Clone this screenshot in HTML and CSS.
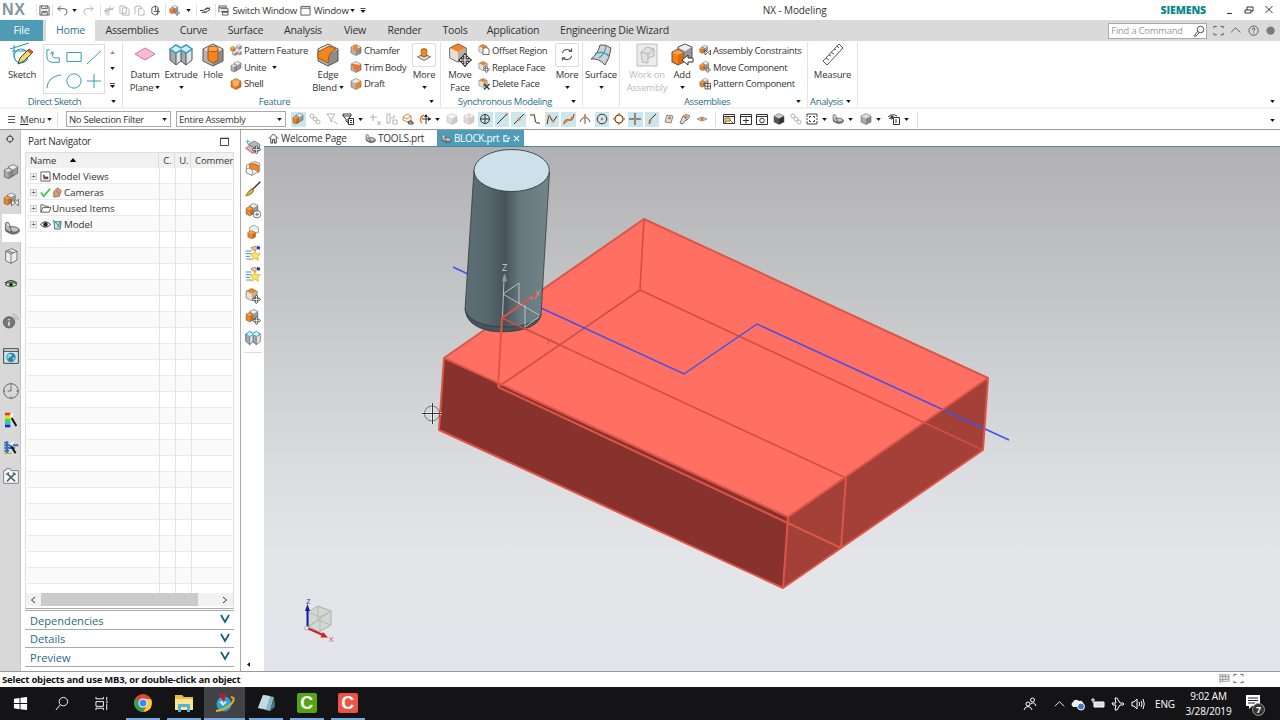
FILE: index.html
```
<!DOCTYPE html>
<html lang="en">
<head>
    <meta charset="utf-8">
    <title>NX - Modeling</title>
    <link rel="stylesheet" href="styles.css">
</head>
<body>
    <!-- shared icons -->
    <svg class="defs">
        <symbol id="cube" viewBox="0 0 24 24">
            <path class="cTop" d="M12 1 22 6 12 11 2 6z"/>
            <path class="cLeft" d="M2 6 12 11V23L2 18z"/>
            <path class="cRight" d="M22 6 12 11V23L22 18z"/>
            <path class="edge" d="M12 1 22 6V18L12 23 2 18V6z"/>
        </symbol>
        <symbol id="cubes" viewBox="0 0 24 24">
            <path class="gTop" d="M15 1 22 4 15 8 8 4z"/>
            <path class="gLeft" d="M8 4 15 8V18L8 14z"/>
            <path class="gRight" d="M22 4 15 8V18L22 14z"/>
            <path class="edge" d="M15 1 22 4V14L15 18 8 14V4z"/>
            <path class="cTop" d="M8 6 14 9 8 12 2 9z"/>
            <path class="cLeft" d="M2 9 8 12V22L2 19z"/>
            <path class="cRight" d="M14 9 8 12V22L14 19z"/>
            <path class="edge" d="M8 6 14 9V19L8 22 2 19V9z"/>
        </symbol>
        <symbol id="move" viewBox="0 0 24 24">
            <path fill="#fff" stroke="#333" stroke-width="2" d="M12 1 16 6H14V10H18V8L23 12 18 16V14H14V18H16L12 23 8 18H10V14H6V16L1 12 6 8V10H10V6H8z"/>
        </symbol>
        <symbol id="cubeMove" viewBox="0 0 24 24">
            <use href="#cube" width="20" height="20"/>
            <use href="#move" x="10" y="10" width="14" height="14"/>
        </symbol>
        <symbol id="cubesMove" viewBox="0 0 24 24">
            <use href="#cubes" width="21" height="21"/>
            <use href="#move" x="11" y="11" width="13" height="13"/>
        </symbol>
        <symbol id="extrude" viewBox="0 0 24 24">
            <path fill="#a4abaf" d="M1 6 7 10V22L1 17zM12 8 17 10V22L12 18z"/>
            <path fill="#dfe3e5" d="M12 8 7 10V22L12 18zM23 6 17 10V22L23 17z"/>
            <path class="edge" d="M1 6V17L7 22 12 18 17 22 23 17V6M7 10V22M12 8V18M17 10V22"/>
            <path fill="#d5eef6" stroke="#2f9fbc" stroke-width="1.500" d="M1 6 7 2 12 5 17 2 23 6 17 10 12 7 7 10z"/>
        </symbol>
        <symbol id="part" viewBox="0 0 24 24">
            <path fill="#777" stroke="#444" d="M2 14Q4 10 13 10 22 11 23 15V17Q20 22 11 21L3 17z"/>
            <path fill="#c9c9c9" stroke="#555" d="M7 12Q14 8 22 13 22 18 14 18 8 17 7 12z"/>
            <path fill="#b5b5b5" stroke="#444" d="M2 14V5Q3 2 7 4 9 6 9 12L12 16 8 18z"/>
            <circle cx="6" cy="7" r="1.500" fill="#eee"/>
        </symbol>
        <symbol id="caret" viewBox="0 0 6 4"><path fill="#111" d="M0 0H6L3 4z"/></symbol>
        <symbol id="bar" viewBox="0 0 6 6"><path fill="#111" d="M0 0H6V1H0zM0 2.500H6L3 6z"/></symbol>
        <symbol id="star" viewBox="0 0 24 24">
            <path stroke="#4a8ad0" stroke-width="1.500" d="M1 9H10M1 13H9M1 17H8M2 21H9"/>
            <path fill="#ffe45c" stroke="#c9a92c" d="M15 8 17 13 23 13 19 17 20 23 15 20 10 23 11 17 8 13 13 13z"/>
            <path fill="#f1c6a0" stroke="#8c6850" d="M9 4 15 2 19 4 16 8 11 7z"/>
            <path fill="#2b36b5" d="M18 1 23 3 22 7 18 6z"/>
        </symbol>
        <symbol id="frame" viewBox="0 0 24 24">
            <path fill="none" stroke="#444" stroke-width="2" d="M2 8V2H22V8M2 16V22H22V16M2 10V14M22 10V14"/>
            <path fill="none" stroke="#444" stroke-width="2" d="M7 10V7H10M14 7H17V10M17 14V17H14M10 17H7V14"/>
        </symbol>
        <symbol id="corners" viewBox="0 0 12 12">
            <path fill="none" stroke="#555" d="M1 3.500V1.500H4M8 1.500H11V3.500M11 8.500V10.500H8M4 10.500H1V8.500"/>
        </symbol>
    </svg>

    <div class="app">
        <div class="titleBar">
            <div class="nxLogo">NX</div>
            <i class="vline"></i>
            <svg class="i12" viewBox="0 0 12 12"><path class="line" d="M1 1H10L11 2V11H1zM3 1V4H9V1M3 11V7H9V11M4 8.500H8M7 2V3"/></svg>
            <i class="vline"></i>
            <svg class="i12 undo" viewBox="0 0 12 12"><path class="line" d="M4 1 1 4 4 7M1 4H8Q11 4 11 7.500 11 10 8 11"/></svg>
            <svg class="caret"><use href="#caret"/></svg>
            <svg class="i12 faint redo" viewBox="0 0 12 12"><path class="line" d="M8 1 11 4 8 7M11 4H4Q1 4 1 7.500 1 10 4 11"/></svg>
            <i class="vline"></i>
            <svg class="i12 faint cut" viewBox="0 0 12 12"><path class="line" d="M7 1 5 8M2 4 10 5M1 7 11 3"/><circle class="line" cx="4" cy="9.500" r="1.500"/><circle class="line" cx="2" cy="6.500" r="1.300"/></svg>
            <svg class="i12 faint" viewBox="0 0 12 12"><path class="line" d="M1 1H6L8 3V9H1zM4 3H9L11 5V11H4z"/></svg>
            <svg class="i12 faint" viewBox="0 0 12 12"><path class="line" d="M1 10V2H3V1H6V2H8V4M5 4H9L11 6V11H5z"/></svg>
            <svg class="i12" viewBox="0 0 12 12"><path class="line" d="M2 3 6 1 9 3V9L6 11 2 9zM4 7H11M8 4V11M6 1V6"/></svg>
            <i class="vline partLine"></i>
            <svg class="i12 orange"><use href="#cubesMove"/></svg>
            <svg class="caret"><use href="#caret"/></svg>
            <i class="vline"></i>
            <svg class="i12 touch" viewBox="0 0 12 12"><path class="line dark" d="M0 6H4L6 8 11 5 8 3 5 5M5 5 11 3M2 8H7"/></svg>
            <i class="vline"></i>
            <svg class="i12" viewBox="0 0 12 12"><path class="line" d="M1 8V1H9V3H1M3 4H11V7H3M5 7H11V11H5zM5 8H11"/></svg>
            <span class="switch">Switch Window</span>
            <svg class="i12" viewBox="0 0 12 12"><path class="line" d="M1 1.500H11V11H1zM1 3.500H11"/></svg>
            <span class="win">Window</span>
            <svg class="caret"><use href="#caret"/></svg>
            <svg class="barCaret"><use href="#bar"/></svg>
            <div class="caption">NX - Modeling</div>
            <div class="siemens">SIEMENS</div>
            <div class="winButtons">
                <svg viewBox="0 0 10 10"><path class="line dark" d="M3 8.500H8"/></svg>
                <svg viewBox="0 0 10 10"><path class="line dark" d="M1 5H7V8H1zM3 5V2H9V6H7"/></svg>
                <svg viewBox="0 0 10 10"><path class="line dark" d="M1.500 1 8.500 8M8.500 1 1.500 8"/></svg>
            </div>
        </div>

        <div class="tabBar">
            <div class="tab file">File</div>
            <div class="tab home">Home</div>
            <div class="tab" style="width:74px">Assemblies</div>
            <div class="tab" style="width:49px">Curve</div>
            <div class="tab" style="width:55px">Surface</div>
            <div class="tab" style="width:60px">Analysis</div>
            <div class="tab" style="width:44px">View</div>
            <div class="tab" style="width:55px">Render</div>
            <div class="tab" style="width:46px">Tools</div>
            <div class="tab" style="width:70px">Application</div>
            <div class="tab wizard">Engineering Die Wizard</div>
            <div class="find"><span>Find a Command</span><svg viewBox="0 0 12 12"><circle class="line" cx="7.500" cy="4.500" r="3.300"/><path class="line" d="M5 6 1 11 3 11 6 8"/></svg></div>
            <div class="tabTools">
                <svg><use href="#corners"/></svg>
                <svg viewBox="0 0 12 12"><path class="line" d="M1 8 6 3 11 8"/></svg>
                <svg viewBox="0 0 12 12"><circle class="line" cx="6" cy="6" r="5"/><path class="line" d="M4.500 5Q4.500 3.200 6 3.200 7.600 3.300 7.500 4.700 6 5.500 6 7M6 8V9"/></svg>
                <svg viewBox="0 0 12 12"><circle fill="#7b7b7b" cx="6" cy="6" r="4.500"/></svg>
            </div>
        </div>

        <div class="ribbon">
            <div class="group sketchGroup">
                <div class="groupBody">
                    <div class="big sketch">
                        <svg viewBox="0 0 24 24"><path class="teal" d="M4 2V14M0 6 19 0M2 8H18"/><circle class="teal" cx="11" cy="13" r="7"/><path fill="#f5d96b" stroke="#444" d="M8 21 10 15 19 6 23 9 14 18z"/><path fill="#d9553c" d="M19 6 23 9 21 11 17 8z"/></svg>
                        <span>Sketch</span>
                    </div>
                    <div class="gallery">
                        <svg viewBox="0 0 18 18"><path class="teal" d="M1 1V8Q1 15 8 15H15V10H10Q7 10 7 4M5 6 7 3 9 6M1 1H4"/></svg>
                        <svg viewBox="0 0 18 18"><path class="teal" d="M1 4H17V14H1z"/></svg>
                        <svg viewBox="0 0 18 18"><path class="teal" d="M1 17 17 2"/></svg>
                        <svg viewBox="0 0 18 18"><path class="teal" d="M1 17Q2 4 17 2"/></svg>
                        <svg viewBox="0 0 18 18"><circle class="teal" cx="9" cy="9" r="8"/></svg>
                        <svg viewBox="0 0 18 18"><path class="teal" d="M9 1V17M1 9H17"/></svg>
                    </div>
                    <div class="galleryArrows">
                        <svg class="up"><use href="#caret"/></svg>
                        <svg><use href="#caret"/></svg>
                        <svg class="tall"><use href="#bar"/></svg>
                    </div>
                </div>
                <div class="groupLabel">Direct Sketch<svg class="corner"><use href="#caret"/></svg></div>
            </div>

            <div class="group featureGroup">
                <div class="groupBody">
                    <div class="big datum">
                        <svg viewBox="0 0 24 24"><path fill="#f9b9d2" stroke="#d5799c" d="M12 5 22 11 12 17 2 11z"/></svg>
                        <span>Datum</span><span>Plane <svg class="caret"><use href="#caret"/></svg></span>
                    </div>
                    <div class="big extrude">
                        <svg><use href="#extrude"/></svg>
                        <span>Extrude</span><span><svg class="caret"><use href="#caret"/></svg></span>
                    </div>
                    <div class="big hole">
                        <svg viewBox="0 0 24 24"><use href="#cube" width="24" height="24"/><path fill="#f5851f" stroke="#a85510" d="M7 6V17L12 20 17 17V6"/><ellipse fill="#f9a14b" stroke="#a85510" cx="12" cy="6" rx="5" ry="2.800"/></svg>
                        <span>Hole</span>
                    </div>
                    <div class="small featA">
                        <div><svg viewBox="0 0 24 24"><use href="#cube" x="0" y="4" width="12" height="12" class="orange"/><use href="#cube" x="12" y="0" width="12" height="12"/><use href="#cube" x="4" y="13" width="11" height="11"/><use href="#cube" x="13" y="12" width="11" height="11"/></svg>Pattern Feature</div>
                        <div><svg><use href="#cubes"/></svg>Unite <svg class="caret"><use href="#caret"/></svg></div>
                        <div><svg class="orange" viewBox="0 0 24 24"><use href="#cube" width="24" height="24"/><circle cx="12" cy="11" r="6" fill="#ffb464"/></svg>Shell</div>
                    </div>
                    <div class="big blend">
                        <svg viewBox="0 0 24 24"><use href="#cube" width="24" height="24"/><path fill="#f5851f" stroke="#a85510" d="M2 9 13 3 20 6Q12 9 12 20L2 15z"/></svg>
                        <span>Edge</span><span>Blend <svg class="caret"><use href="#caret"/></svg></span>
                    </div>
                    <div class="small featB">
                        <div><svg viewBox="0 0 24 24"><use href="#cube" width="24" height="24"/><path fill="#f5851f" d="M5 4 13 1 18 11 8 15z"/></svg>Chamfer</div>
                        <div><svg viewBox="0 0 24 24"><use href="#cube" width="24" height="24"/><path fill="#e77735" d="M3 5 20 8V20L8 18z"/></svg>Trim Body</div>
                        <div><svg viewBox="0 0 24 24"><use href="#cube" width="24" height="24"/><path fill="#f5851f" d="M11 10 22 6 20 19 12 23z"/></svg>Draft</div>
                    </div>
                    <div class="big more">
                        <svg viewBox="0 0 24 24"><path fill="#ddd" stroke="#666" d="M12 11 19 14 12 18 5 14z"/><path fill="#f5851f" stroke="#a85510" d="M9 6Q12 4 15 6V13Q12 15 9 13z"/></svg>
                        <span>More</span><span><svg class="caret"><use href="#caret"/></svg></span>
                    </div>
                </div>
                <div class="groupLabel">Feature<svg class="corner"><use href="#caret"/></svg></div>
            </div>

            <div class="group syncGroup">
                <div class="groupBody">
                    <div class="big moveFace">
                        <svg class="topOrange"><use href="#cubeMove"/></svg>
                        <span>Move</span><span>Face</span>
                    </div>
                    <div class="small sync">
                        <div><svg class="topOrange" viewBox="0 0 24 24"><use href="#cube" width="20" height="20"/><path fill="#fff" stroke="#444" stroke-width="1.500" d="M10 9 16 7 22 10V21H10z"/></svg>Offset Region</div>
                        <div><svg class="topOrange"><use href="#cubeMove"/></svg>Replace Face</div>
                        <div><svg class="topOrange" viewBox="0 0 24 24"><use href="#cube" width="20" height="20"/><path stroke="#333" stroke-width="2.500" d="M12 12 23 23M23 12 12 23"/></svg>Delete Face</div>
                    </div>
                    <div class="big more">
                        <svg viewBox="0 0 24 24"><path class="line thick" d="M7 10Q8 6 12 6 15 6 17 8M17 5V8H14M17 13Q16 17 12 17 9 17 7 15M7 18V15H10"/></svg>
                        <span>More</span><span><svg class="caret"><use href="#caret"/></svg></span>
                    </div>
                </div>
                <div class="groupLabel">Synchronous Modeling<svg class="corner"><use href="#caret"/></svg></div>
            </div>

            <div class="group surfaceGroup">
                <div class="groupBody">
                    <div class="big surface">
                        <svg viewBox="0 0 24 24"><path fill="#cdd2d5" stroke="#555" d="M2 16Q9 11 11 2 17 1 22 5 21 15 16 22 10 15 2 16z"/><path class="teal" d="M10 15Q16 11 17 3M6 11Q13 7 20 13"/></svg>
                        <span>Surface</span><span><svg class="caret"><use href="#caret"/></svg></span>
                    </div>
                </div>
            </div>

            <div class="group asmGroup">
                <div class="groupBody">
                    <div class="big work">
                        <svg viewBox="0 0 24 24"><path fill="#ececec" stroke="#bdbdbd" d="M2 1H22V23H2z"/><path fill="#e0e0e0" stroke="#b5b5b5" d="M6 9 12 4 19 6V13L13 15V20L7 19z"/><path fill="none" stroke="#b5b5b5" d="M6 9 13 11 19 6M13 11V15"/></svg>
                        <span>Work on</span><span>Assembly</span>
                    </div>
                    <div class="big add">
                        <svg class="orange" viewBox="0 0 24 24"><use href="#cubes" width="24" height="24"/><path fill="#fff" stroke="#333" d="M23 15V19H18V22L12 17 18 12V15z"/></svg>
                        <span>Add</span><span><svg class="caret"><use href="#caret"/></svg></span>
                    </div>
                    <div class="small asm">
                        <div><svg class="orange" viewBox="0 0 24 24"><use href="#cubes" width="19" height="22"/><path fill="#fff" stroke="#333" stroke-width="1.500" d="M12 12 17 17 12 22zM23 12 18 17 23 22z"/></svg>Assembly Constraints</div>
                        <div><svg class="orange"><use href="#cubesMove"/></svg>Move Component</div>
                        <div><svg class="orange" viewBox="0 0 24 24"><use href="#cubes" width="20" height="20"/><path fill="#fff" stroke="#333" stroke-width="1.500" d="M12 11H23V22H12zM17.500 11V22M12 16.500H23"/></svg>Pattern Component</div>
                    </div>
                </div>
                <div class="groupLabel">Assemblies<svg class="corner"><use href="#caret"/></svg></div>
            </div>

            <div class="group anaGroup">
                <div class="groupBody">
                    <div class="big measure">
                        <svg viewBox="0 0 24 24"><path fill="#fff" stroke="#555" d="M2 18 18 1 22 5 6 22zM5 15 8 17M8 12 10 13M10 9 13 11M13 6 15 7M16 3 18 5"/></svg>
                        <span>Measure</span>
                    </div>
                </div>
                <div class="groupLabel">Analysis<svg class="corner"><use href="#caret"/></svg></div>
            </div>
            <svg class="ribbonCaret"><use href="#caret"/></svg>
        </div>

        <div class="selectBar">
            <svg class="burger" viewBox="0 0 8 8"><path class="line" d="M0 1.500H7M0 4.500H7M0 7.500H7"/></svg>
            <span class="menu"><u>M</u>enu</span>
            <svg class="caret"><use href="#caret"/></svg>
            <i class="vline"></i>
            <div class="combo comboA">No Selection Filter<svg class="caret"><use href="#caret"/></svg></div>
            <div class="combo comboB">Entire Assembly<svg class="caret"><use href="#caret"/></svg></div>
            <div class="slots">
                <div class="slot on"><svg class="orange"><use href="#cubes"/></svg></div>
                <div class="slot faint"><svg viewBox="0 0 12 12"><circle class="line" cx="3" cy="3" r="2"/><circle class="line" cx="6" cy="6" r="2"/><circle class="line" cx="9" cy="9" r="2"/></svg></div>
                <div class="slot faint"><svg viewBox="0 0 12 12"><path class="line" d="M1 1H9L6 5V9L4 7V5zM8 8 11 11"/></svg></div>
                <div class="slot"><svg viewBox="0 0 12 12"><path class="line dark" d="M1 3V1H9V3M1 3H9L6 6V10L4 8V6z"/><path class="line dark" d="M6.500 5.500H11.500V11.500H6.500zM8 7.500H10M8 9.500H10"/></svg></div>
                <svg class="caret"><use href="#caret"/></svg>
                <div class="slot faint gapLeft"><svg viewBox="0 0 12 12"><path class="line" d="M4 1V8M1 4H8M8 8 11 11M11 8V11H8"/></svg></div>
                <div class="slot faint"><svg viewBox="0 0 12 12"><path class="line" d="M1 1H4V10H1zM5 5H8V2M7 7H11V11H7z"/></svg></div>
                <div class="slot"><svg viewBox="0 0 12 12"><path fill="#fff" stroke="#d98a35" d="M1 4 5 1 9 3V7L5 9 1 7zM1 4 5 6 9 3"/><path class="line dark" d="M6 9H11V11H7zM9 7V9"/></svg></div>
                <div class="slot"><svg viewBox="0 0 12 12"><path fill="none" stroke="#e07b2a" stroke-width="1.500" d="M3 10Q-1 5 5 2"/><path class="line dark" d="M3 6H12M7 2V11"/><path fill="#222" d="M7 1 9 4H5zM12 6 9 8V4z"/></svg></div>
                <svg class="caret"><use href="#caret"/></svg>
                <div class="slot faint gapLeft"><svg><use href="#cube"/></svg></div>
                <div class="slot faint"><svg viewBox="0 0 24 24"><use href="#cube" width="24" height="24"/><path stroke="#e07b2a" stroke-width="3" d="M12 3V20"/></svg></div>
                <div class="slot on"><svg viewBox="0 0 12 12"><circle class="line dark" cx="6" cy="6" r="4.500"/><path class="line dark" d="M6 2V10M2 6H10"/></svg></div>
                <div class="slot on"><svg viewBox="0 0 12 12"><path class="line dark" d="M1 11 10 2"/><circle class="dot" cx="10.500" cy="1.500" r="1.300"/></svg></div>
                <div class="slot on"><svg viewBox="0 0 12 12"><path class="line dark" d="M1 11 11 1"/><circle class="dot" cx="6" cy="6" r="1.500"/></svg></div>
                <div class="slot"><svg viewBox="0 0 12 12"><path class="line dark" d="M1 2H4Q6 2 6 6T8 10H11"/><circle class="dot" cx="5" cy="2" r="1.300"/></svg></div>
                <div class="slot on"><svg viewBox="0 0 12 12"><path class="line dark" d="M1 11 3 2 7 9 11 3"/><circle class="dot" cx="3" cy="3" r="1.500"/><circle class="dot" cx="7" cy="8" r="1.500"/></svg></div>
                <div class="slot on"><svg viewBox="0 0 12 12"><path fill="none" stroke="#b3602a" stroke-width="1.500" d="M1 11Q2 6 6 7T11 1"/><circle class="dot" cx="3" cy="8" r="1.500"/><circle class="dot" cx="9" cy="5" r="1.500"/></svg></div>
                <div class="slot"><svg viewBox="0 0 12 12"><path class="line" d="M1 9Q2 5 6 4 10 5 11 9M6 1V11"/><circle class="dot" cx="6" cy="4" r="1.500"/></svg></div>
                <div class="slot on"><svg viewBox="0 0 12 12"><circle class="line dark" cx="6" cy="6" r="4.800"/><circle class="dot" cx="6" cy="6" r="1.300"/></svg></div>
                <div class="slot"><svg viewBox="0 0 12 12"><circle class="line dark" cx="6" cy="6" r="4"/><circle class="dot" cx="6" cy="1.500" r="1.400"/><circle class="dot" cx="10.500" cy="6" r="1.400"/><circle class="dot" cx="6" cy="10.500" r="1.400"/><circle class="dot" cx="1.500" cy="6" r="1.400"/></svg></div>
                <div class="slot on"><svg viewBox="0 0 12 12"><path class="line dark" d="M6 0V12M0 6H12"/><circle class="dot" cx="6" cy="6" r="1.500"/></svg></div>
                <div class="slot on"><svg viewBox="0 0 12 12"><path class="line dark" d="M3 11Q4 5 10 1"/><circle class="dot" cx="4" cy="8" r="1.500"/></svg></div>
                <div class="slot"><svg viewBox="0 0 12 12"><path fill="#ddd" stroke="#888" d="M2 9 4 2 10 3 8 10z"/><circle class="dot" cx="6.500" cy="5" r="1.500"/></svg></div>
                <div class="slot"><svg viewBox="0 0 12 12"><path fill="#ddd" stroke="#777" d="M1 10 4 3Q8 0 11 3L8 7Q5 7 4 11zM4 3 8 7"/><circle class="dot" cx="7" cy="4" r="1.500"/></svg></div>
                <div class="slot"><svg viewBox="0 0 12 12"><path fill="#ddd" stroke="#999" d="M1 6 6 4 11 6 6 8z"/><circle class="dot" cx="6" cy="6" r="1.700"/></svg></div>
                <i class="vline"></i>
                <div class="slot"><svg viewBox="0 0 12 12"><path fill="#fff" stroke="#333" d="M.5 1.500H11.500V10.500H.5zM.5 3.500H11.500"/><path fill="#f6cf8f" stroke="#9a6b2b" d="M2 5H7V8H4L2 10zM7 7 10 10"/></svg></div>
                <div class="slot"><svg viewBox="0 0 12 12"><path class="line dark" d="M.5 1.500H11.500V11.500H.5zM.5 3.500H11.500M6 4.500V10.500M3 7.500H9"/></svg></div>
                <div class="slot"><svg viewBox="0 0 12 12"><path class="line dark" d="M.5 1.500H11.500V11.500H.5zM.5 3.500H11.500"/><circle class="line dark" cx="6" cy="7.500" r="2.300"/></svg></div>
                <div class="slot darkCube"><svg><use href="#cube"/></svg></div>
                <div class="slot faint"><svg viewBox="0 0 12 12"><circle class="line" cx="3" cy="3" r="2"/><circle class="line" cx="6" cy="6" r="2"/><circle class="line" cx="9" cy="9" r="2"/></svg></div>
                <div class="slot"><svg><use href="#frame"/></svg></div>
                <svg class="caret"><use href="#caret"/></svg>
                <div class="slot half"><svg><use href="#part"/></svg></div>
                <svg class="caret"><use href="#caret"/></svg>
                <div class="slot half"><svg class="midGray"><use href="#cube"/></svg></div>
                <svg class="caret"><use href="#caret"/></svg>
                <div class="slot half"><svg viewBox="0 0 12 12"><path class="line dark" d="M0 4Q4 0 9 3M1 5Q4 7 5 5"/><circle cx="4" cy="4" r="1.600" fill="#333"/><path fill="#fff" stroke="#333" d="M5.500 4.500H11.500V11.500H5.500zM7 7H9M7 9H9"/></svg></div>
                <svg class="caret"><use href="#caret"/></svg>
                <i class="vline"></i>
            </div>
            <svg class="caret last"><use href="#caret"/></svg>
        </div>

        <div class="main">
            <div class="resourceBar">
                <div class="gear"><svg viewBox="0 0 12 12"><circle class="line dark" cx="6" cy="6" r="3.500"/><path class="line dark" d="M6 1V3M6 9V11M1 6H3M9 6H11"/></svg></div>
                <div class="res"><svg class="midGray"><use href="#cubes"/></svg></div>
                <div class="res"><svg class="orange" viewBox="0 0 24 24"><use href="#cubes" width="20" height="22"/><path fill="#fff" stroke="#333" d="M13 11 18 16 13 21zM23 11 18 16 23 21z"/></svg></div>
                <div class="res active"><svg><use href="#part"/></svg></div>
                <div class="res"><svg viewBox="0 0 24 24"><path fill="#ededed" stroke="#444" d="M4 5 13 1 21 5V18L12 23 4 19zM4 5 12 9 21 5M12 9V23M7 4 15 7"/></svg></div>
                <div class="res"><svg viewBox="0 0 24 24"><path fill="#dcefd4" stroke="#3d5f35" stroke-width="1.500" d="M3 13Q12 6 21 13 12 19 3 13z"/><circle cx="12" cy="13" r="3.500" fill="#418a30"/><circle cx="12" cy="13" r="1.700"/><path stroke="#333" stroke-width="2" fill="none" d="M3 11Q12 3 21 11"/></svg></div>
                <div class="res gap9"><svg viewBox="0 0 24 24"><circle cx="9" cy="14" r="8.500" fill="#777" stroke="#444"/><path stroke="#fff" stroke-width="2" d="M9 9V11M9 13V19"/><path fill="none" stroke="#aaa" stroke-width="1.500" d="M14 1Q22 3 23 11M14 4Q19 5 20 11"/></svg></div>
                <div class="res gap7"><svg viewBox="0 0 24 24"><path fill="#d5e6ee" stroke="#444" stroke-width="1.500" d="M1 1H23V23H1zM1 5H23"/><circle cx="12" cy="14" r="7" fill="#2587ab"/><path fill="#9dd5df" d="M8 9Q13 8 14 12 9 13 7 17 5 13 8 9zM14 15 18 13 16 19z"/></svg></div>
                <div class="res gap7"><svg viewBox="0 0 24 24"><circle class="line dark" cx="12" cy="12" r="11"/><path class="line dark" d="M12 4V12H7M12 20V23M20 12H23M1 12H3M12 1V3"/></svg></div>
                <div class="res gap1"><svg viewBox="0 0 24 24"><path fill="#e33b26" d="M3 1H11V6H3z"/><path fill="#f5d928" d="M3 5H11V10H3z"/><path fill="#30e43b" d="M3 10H11V15H3z"/><path fill="#20c4e8" d="M3 15H11V19H3z"/><path fill="#1929cf" d="M3 19H11V23H3z"/><path fill="#fff" d="M10 4 16 2 14 10z"/><path stroke="#111" stroke-width="3" d="M13 9 20 21"/></svg></div>
                <div class="res"><svg viewBox="0 0 24 24"><path stroke="#3471b9" stroke-width="3" d="M2 4H8M2 8H23M2 12H18M2 16H9M6 2V20"/><path stroke="#c4a64d" stroke-width="2" d="M2 20H13"/><path fill="#fff" d="M10 6 16 2 14 10z"/><path stroke="#111" stroke-width="3" d="M12 9 19 20"/></svg></div>
                <div class="res"><svg viewBox="0 0 24 24"><path fill="#f7f7f7" stroke="#7c858a" stroke-width="1.500" d="M1 4H4L5 1H11L12 4H23V23H1z"/><path stroke="#4f6872" stroke-width="2.500" d="M6 8 18 20M18 8 6 20M5 10 9 7M15 7 19 10"/></svg></div>
            </div>

            <div class="navigator">
                <div class="navTitle">Part Navigator<svg viewBox="0 0 10 10"><path class="line dark" d="M.5 1.500H9.500V9.500H.5zM0 1.500H10"/></svg></div>
                <div class="tree">
                    <div class="treeHead">
                        <div class="colName">Name<svg class="sort" viewBox="0 0 8 5"><path d="M0 5 4 0 8 5z"/></svg></div>
                        <div class="colC">C.</div><div class="colC">U.</div><div class="colLast">Commer</div>
                    </div>
                    <div class="treeBody">
                        <div class="treeRow"><i class="plus">+</i><svg viewBox="0 0 12 12"><path class="line" d="M1 1H11V11H1z"/><path fill="#555" d="M3 4H5V6H9V9H4z"/></svg>Model Views</div>
                        <div class="treeRow"><i class="plus">+</i><svg viewBox="0 0 12 12"><path fill="none" stroke="#2fc43c" stroke-width="1.700" d="M1 6 4 10 11 2"/></svg><svg viewBox="0 0 12 12"><path fill="#d6a173" stroke="#8d6a4b" d="M2 5 6 1 10 4 8 10 2 11zM5 4 7 7"/></svg>Cameras</div>
                        <div class="treeRow"><i class="plus">+</i><svg viewBox="0 0 12 12"><path class="line" d="M1 10V2H4L5 3.500H9V5M1 10 3 5H12L10 10z"/></svg>Unused Items</div>
                        <div class="treeRow"><i class="plus">+</i><svg viewBox="0 0 12 12"><path class="line dark" d="M.5 6Q6 0 11.500 6 6 12 .5 6z"/><circle cx="6" cy="6" r="2.400" fill="#222"/></svg><svg viewBox="0 0 12 12"><path fill="#cfe0e6" stroke="#666" d="M2 3H10L9 11H3z"/><path class="teal" d="M1 1 9 9M10 2 6 9"/></svg>Model</div>
                    </div>
                    <div class="hScroll">
                        <svg viewBox="0 0 6 8"><path class="line dark" d="M5 1 1.500 4 5 7"/></svg>
                        <div class="track"><div class="thumb"></div></div>
                        <svg viewBox="0 0 6 8"><path class="line dark" d="M1 1 4.500 4 1 7"/></svg>
                    </div>
                </div>
                <div class="panels">
                    <div class="panel">Dependencies<svg viewBox="0 0 10 8"><path d="M1 0 5 7 9 0"/></svg></div>
                    <div class="panel">Details<svg viewBox="0 0 10 8"><path d="M1 0 5 7 9 0"/></svg></div>
                    <div class="panel">Preview<svg viewBox="0 0 10 8"><path d="M1 0 5 7 9 0"/></svg></div>
                </div>
            </div>

            <div class="toolStrip">
                <div class="tool"><svg viewBox="0 0 24 24"><path fill="#e9a9c0" stroke="#555" d="M1 14 12 6 22 12 12 22z"/><path fill="#b4bbbf" stroke="#555" d="M5 8 14 3 22 8V16L12 12z"/><path class="teal" d="M1 4H8M4 1V8"/><use href="#move" x="10" y="9" width="14" height="14"/></svg></div>
                <div class="tool"><svg viewBox="0 0 24 24"><path fill="#eee" stroke="#666" d="M2 8 14 2 22 5V17L10 23 2 19z"/><path fill="#f5851f" stroke="#a85510" d="M7 6Q15 4 20 8V18Q15 12 7 14z"/><path fill="#fff" stroke="#777" d="M2 13Q8 11 11 16V23L2 19z"/></svg></div>
                <div class="tool"><svg viewBox="0 0 24 24"><path stroke="#333" stroke-width="2" d="M23 1 10 14"/><path fill="#e0aa32" stroke="#665522" d="M11 12Q9 11 6 15L1 22Q9 22 13 15z"/></svg></div>
                <div class="tool"><svg class="orange" viewBox="0 0 24 24"><use href="#cubes" width="21" height="21"/><circle cx="18" cy="17" r="5.500" fill="#fff" stroke="#333"/><path stroke="#333" d="M18 14V20M15 17H21"/></svg></div>
                <div class="tool"><svg class="orange" viewBox="0 0 24 24"><path fill="#f2f2f2" stroke="#777" d="M7 5 14 2 20 5V13L13 14H7z"/><use href="#cube" x="3" y="9" width="14" height="14"/></svg></div>
                <div class="tool"><svg><use href="#star"/></svg></div>
                <div class="tool"><svg><use href="#star"/></svg></div>
                <div class="tool"><svg class="topOrange"><use href="#cubeMove"/></svg></div>
                <div class="tool"><svg class="orange"><use href="#cubesMove"/></svg></div>
                <div class="tool"><svg><use href="#extrude"/></svg></div>
                <div class="stripEnd"></div>
                <svg class="left" viewBox="0 0 4 6"><path d="M4 0V6L0 3z"/></svg>
            </div>

            <div class="work-area">
                <div class="docTabs">
                    <div class="docTab welcome"><svg viewBox="0 0 12 12"><path class="line dark" d="M1 6 6 1 11 6M3 5V11H5V7H7V11H9V5"/></svg>Welcome Page</div>
                    <div class="docTab tools"><svg><use href="#part"/></svg>TOOLS.prt</div>
                    <div class="docTab block"><svg><use href="#part"/></svg>BLOCK.prt<svg class="mini" viewBox="0 0 8 8"><path d="M5 1H1V7H6V5M4 4H7V2"/></svg><svg class="mini close" viewBox="0 0 8 8"><path d="M1 1 7 7M7 1 1 7"/></svg></div>
                </div>
                <!-- graphics window, user units are screen pixels -->
                <svg class="scene" viewBox="264 147 1016 524">
                    <defs>
                        <linearGradient id="steel">
                            <stop offset="0" stop-color="#5c6d74"/>
                            <stop offset=".25" stop-color="#58696f"/>
                            <stop offset=".47" stop-color="#46545a"/>
                            <stop offset=".65" stop-color="#67777e"/>
                            <stop offset="1" stop-color="#74848b"/>
                        </linearGradient>
                    </defs>
                    <path class="blue" d="M453 267 470 275"/>
                    <path fill="#ff7063" d="M644 219 988 378 788 517 444 358z"/>
                    <path fill="#88322d" d="M444 358 788 517 783 588 439 430z"/>
                    <path fill="#a34138" d="M988 378 983 450 783 588 788 517z"/>
                    <path class="inner" d="M644 219 640 290 983 450M640 290 498 387M502 318 846 478"/>
                    <path class="blue" d="M541 308 684 374 757 324 1009 440"/>
                    <path class="outer" d="M644 219 988 378 788 517 444 358zM444 358 439 430 783 588 983 450 988 378M788 517 783 588M846 478 841 548 498 387"/>
                    <path fill="#45555c" stroke="#2b3639" stroke-width=".7" d="M465 309Q466 326 490 331 512 334 530 327 540 322 541 315z"/>
                    <path fill="url(#steel)" d="M474 170 465 309C467 322 488 327 505 327S539 322 541 315L549.500 172z"/>
                    <path fill="none" stroke="#273135" stroke-width=".7" d="M474 170 465 309C467 322 488 327 505 327S539 322 541 315L549.500 172"/>
                    <ellipse cx="511.700" cy="170.500" rx="37.700" ry="21" fill="#cce1ea" stroke="#273135" stroke-width=".8"/>
                    <path class="outer" d="M538 293 502 318 498 387"/>
                    <path class="inner" d="M502 318 560 345"/>
                    <g fill="none" stroke="#c3cbce" stroke-width=".9">
                        <path d="M502.500 316 504 280M503 294 519 283V304M503 294 539 315M525 305V327L539 317"/>
                        <path fill="#8e9a9e" stroke="#8e9a9e" d="M504.500 274 502.500 281H506.500z"/>
                    </g>
                    <path fill="none" stroke="#c9968e" d="M536 291 539 295M540 290 535 299M530 297 533 299"/>
                    <path fill="none" stroke="#b8675c" d="M537 334 541 336M546 339 549 342M552 338 547 344"/>
                    <text x="502" y="271" class="axis">Z</text>
                    <!-- cursor -->
                    <g fill="none" stroke="#fff" stroke-width="2.500" opacity=".7"><path d="M432.500 403V424M422 413.500H442"/></g>
                    <g fill="none" stroke="#333"><circle cx="432" cy="413.500" r="7.500" stroke-width=".6"/><path d="M432.500 403V424M422 413.500H442"/></g>
                    <!-- view triad -->
                    <path fill="#d3d7d3" stroke="#aab0aa" d="M308 612 318 606 331 611V625L319 632 308 626z"/>
                    <path fill="none" stroke="#b5bab5" d="M308 612 320 617 331 611M320 617V632M318 606V620L308 626M318 620 331 625"/>
                    <path stroke="#a2c6a4" d="M307 628 328 613"/>
                    <path stroke="#10209c" stroke-width="2" d="M307.500 627V610"/><path fill="#10209c" d="M307.500 604 310 611H305z"/>
                    <path stroke="#c22" stroke-width="2" d="M307 628 323 635"/><path fill="#c22" d="M328 637.500 320.500 637.500 323 632z"/>
                    <circle cx="306.500" cy="628" r="2" fill="#eee" stroke="#888" stroke-width=".6"/>
                    <text x="306" y="604" class="axis z">Z</text>
                    <text x="329" y="642" class="axis x">X</text>
                </svg>
            </div>
        </div>

        <div class="statusBar">
            <span>Select objects and use MB3, or double-click an object</span>
            <svg viewBox="0 0 12 12"><path class="line" opacity=".6" d="M1 1V11M1 2H11V9H1M4 2V4H1M4 4H7V2M7 4H10V7H7zM4 4V7H7M4 7V9M1 7H4"/></svg>
            <svg><use href="#corners"/></svg>
        </div>

        <div class="taskBar">
            <div class="task"><svg viewBox="0 0 16 16"><path fill="#fff" d="M1 3 7 2V7.500H1zM8 1.900 15 1V7.500H8zM1 8.500H7V14L1 13zM8 8.500H15V15L8 14z"/></svg></div>
            <div class="task"><svg viewBox="0 0 16 16"><path class="white" d="M7 9 2 15"/><circle class="white" cx="10" cy="6" r="4.500"/></svg></div>
            <div class="task"><svg viewBox="0 0 16 16"><path class="white" d="M1 1V3H9V1M1 6H9V11H1zM1 15V13H9V15M12.500 1V5M12.500 8V15M11.500 6.500H14"/></svg></div>
            <div class="task open"><svg class="large" viewBox="0 0 20 20"><circle cx="10" cy="10" r="9" fill="#e34436"/><path fill="#2ea454" d="M2.200 5.500 10 10 11 19Q3 19 1 11 1 8 2.200 5.500z"/><path fill="#fbcb3a" d="M10 6H18Q20 11 17 16 14 19 10.500 19L14 11z"/><circle cx="10" cy="10" r="4.500" fill="#fff"/><circle cx="10" cy="10" r="3.500" fill="#4285f4"/></svg></div>
            <div class="task open"><svg class="large" viewBox="0 0 20 20"><path fill="#e7bd51" d="M1 2H8L10 4H19V16H1z"/><path fill="#fce58e" d="M1 6H19V17H1z"/><path fill="#55b2d8" d="M4 11H16V19H13V14H7V19H4z"/></svg></div>
            <div class="task open current"><svg class="large" viewBox="0 0 20 20"><circle cx="9" cy="11" r="7.500" fill="#28a5cf"/><path fill="#bdeaf2" d="M4 9Q8 6 12 9L8 13z"/><path fill="none" stroke="#eca92c" stroke-width="2" d="M16 4Q21 5 17 10 10 17 1 18"/><path fill="#c2183a" d="M3 1 11 1 9 10 7 6z"/></svg></div>
            <div class="task open"><svg class="large" viewBox="0 0 20 20"><path fill="#86b6c4" d="M7 2 18 4 14 18 2 15z"/><path fill="#c2dbe1" d="M7 2 14 3 10 16 2 15z"/><path fill="#4b7380" d="M14 18 18 4 19 14z"/></svg></div>
            <div class="task open"><div class="camtasia green">C</div></div>
            <div class="task open"><div class="camtasia red">C</div></div>
            <div class="tray">
                <svg class="people" viewBox="0 0 14 14"><circle class="white" cx="9.500" cy="3" r="2"/><circle class="white" cx="5" cy="7" r="2"/><path class="white" d="M1 13Q2 9.500 5 9.500T9 13M7.500 7Q11 4 13 9"/></svg>
                <svg class="chev" viewBox="0 0 12 12"><path class="white" d="M1 9 6 4 11 9"/></svg>
                <svg viewBox="0 0 14 14"><path fill="#eee" d="M2 10Q-1 7 2 5 4 1 8 4 12 3 12 7V10z"/><circle cx="10" cy="9.500" r="3.500" fill="#3b77c8" stroke="#fff"/></svg>
                <svg viewBox="0 0 14 14"><path fill="#ddd" stroke="#fff" d="M3 5H13V10H3z"/><path class="white" d="M0 3H4M2 1V6"/></svg>
                <svg viewBox="0 0 14 14"><path class="white" d="M1 6H5L4 1H6L9 6H12Q14 7 12 8H9L6 13H4L5 8H2z"/></svg>
                <svg viewBox="0 0 14 14"><path class="white" d="M1 5H3L6 2V12L3 9H1zM8 5Q9 7 8 9M10 4Q12 7 10 10M12 2Q14.500 7 12 12"/></svg>
                <span class="lang">ENG</span>
                <div class="clock"><div>9:02 AM</div><div>3/28/2019</div></div>
                <div class="notes">
                    <svg viewBox="0 0 14 14"><path fill="#fff" d="M0 0H14V11H6L3 14V11H0z"/><path stroke="#222" d="M2 3H12M2 5.500H12M2 8H9"/></svg>
                    <div class="badge">7</div>
                </div>
            </div>
        </div>
    </div>
</body>
</html>
```
FILE: styles.css
```
* {
    box-sizing: border-box;
}
body {
    margin: 0;
    font-family: "Open Sans", "Noto Sans", sans-serif;
    font-size: 9.5px;
    letter-spacing: -0.35px;
    color: #333;
    overflow: hidden;
    --t: #e8e8e8;
    --l: #b4b4b4;
    --r: #8c8c8c;
}
svg {
    flex: none;
    overflow: visible;
}
.defs {
    position: absolute;
    width: 0;
    height: 0;
}
.app {
    display: flex;
    flex-direction: column;
    width: 1280px;
    height: 720px;
    background-color: #fff;
    white-space: nowrap;
}

/* icon paint */
.cTop { fill: var(--t); }
.cLeft { fill: var(--l); }
.cRight { fill: var(--r); }
.gTop { fill: #eee; }
.gLeft { fill: #bbb; }
.gRight { fill: #999; }
.edge {
    fill: none;
    stroke: #555;
    stroke-width: 1;
}
.orange {
    --t: #f9a040;
    --l: #f57f14;
    --r: #d96c12;
}
.topOrange {
    --t: #f5851f;
    --l: #e8e0d8;
    --r: #b8b0a8;
}
.midGray {
    --t: #ddd;
    --l: #aaa;
    --r: #888;
}
.darkCube {
    --t: #ccc;
    --l: #555;
    --r: #333;
}
.line {
    fill: none;
    stroke: #555;
}
.line.dark {
    stroke: #333;
}
.line.thick {
    stroke-width: 1.2;
}
.teal {
    fill: none;
    stroke: #2f9ab8;
    stroke-width: 1.1;
}
.white {
    fill: none;
    stroke: #fff;
}
.dot { fill: #e07b2a; }
.faint { opacity: 0.45; }
.caret {
    width: 5px;
    height: 3px;
}
.vline {
    width: 1px;
    height: 15px;
    background-color: #ddd;
}

/* title bar */
.titleBar {
    display: flex;
    align-items: center;
    height: 20px;
    font-size: 9.7px;
    letter-spacing: -0.3px;
}
.nxLogo {
    width: 36px;
    padding-left: 2px;
    font-family: "Liberation Sans", sans-serif;
    font-size: 16px;
    font-weight: bold;
    letter-spacing: 0.8px;
    color: #8095a0;
}
.titleBar .vline {
    height: 13px;
    background-color: #e2e2e2;
}
.i12 {
    width: 11px;
    height: 11px;
}
.titleBar .i12 { margin: 0 2.2px; }
.titleBar .undo {
    margin-left: 4px;
    margin-right: 4px;
}
.titleBar .redo {
    margin-left: 6px;
    margin-right: 6px;
}
.titleBar .partLine { margin-left: 2px; }
.titleBar .orange {
    margin-left: 3px;
}
.titleBar .orange + .caret { margin: 0 5px 0 4px; }
.titleBar .touch {
    margin-left: 3px;
    margin-right: 4px;
}
.switch {
    width: 66px;
    padding-left: 1px;
}
.win {
    width: 37px;
    padding-left: 1px;
}
.barCaret {
    width: 6px;
    height: 5px;
    margin-left: 5px;
}
.caption {
    margin-left: 397px;
    font-size: 10px;
    letter-spacing: -0.1px;
}
.siemens {
    margin-left: auto;
    font-size: 10.5px;
    font-weight: 800;
    letter-spacing: -0.1px;
    color: #0a8a8a;
}
.winButtons {
    display: flex;
    gap: 10px;
    padding: 0 6px 0 18px;
}
.winButtons svg {
    width: 10px;
    height: 10px;
}

/* ribbon tabs */
.tabBar {
    display: flex;
    align-items: center;
    height: 21px;
    background-color: #dadada;
    font-size: 10.6px;
    letter-spacing: -0.25px;
}
.tab {
    height: 21px;
    line-height: 20px;
    text-align: center;
}
.file {
    width: 43px;
    margin-right: 3px;
    background-color: #4e9bb5;
    color: #fff;
}
.home {
    width: 49px;
    background-color: #fff;
    color: #1f7d95;
}
.wizard {
    width: 133px;
}
.find {
    display: flex;
    align-items: center;
    justify-content: space-between;
    width: 99px;
    height: 16px;
    margin-left: auto;
    padding: 0 1px 0 2px;
    border: 1px solid #aaa;
    background-color: #fff;
    font-size: 9.4px;
    letter-spacing: -0.2px;
    color: #999;
}
.find svg {
    width: 12px;
    height: 12px;
}
.tabTools {
    display: flex;
    gap: 6px;
    padding: 0 4px 0 6px;
}
.tabTools svg {
    width: 11.2px;
    height: 11.2px;
}

/* ribbon */
.ribbon {
    display: flex;
    height: 68px;
    border-bottom: 2px solid #f2f2f2;
}
.group {
    display: flex;
    flex-direction: column;
    height: 65px;
    margin-top: 1px;
    border-right: 1px solid #e3e3e3;
}
.groupBody {
    display: flex;
    height: 53px;
    padding-top: 1px;
}
.groupLabel {
    position: relative;
    height: 12px;
    line-height: 14px;
    text-align: center;
    color: #1f7088;
    padding-right: 13px;
}
.corner {
    position: absolute;
    right: 6px;
    top: 5px;
    width: 5px;
    height: 3px;
}
.sketchGroup { width: 123px; }
.featureGroup { width: 318px; }
.syncGroup { width: 142px; }
.surfaceGroup { width: 37px; }
.asmGroup { width: 188px; }
.anaGroup { width: 50px; }
.featureGroup .groupLabel { padding-right: 14px; }
.anaGroup .groupLabel { padding-right: 12px; }
.big {
    display: flex;
    flex-direction: column;
    align-items: center;
    letter-spacing: -0.2px;
}
.big > svg {
    width: 24px;
    height: 24px;
}
.big span {
    display: flex;
    align-items: center;
    gap: 2px;
    height: 13px;
    line-height: 13px;
}
.big svg + span { margin-top: 1px; }
.sketch { width: 34px; margin-left: 5px; }
.datum { width: 34px; margin-left: 5px; }
.extrude { width: 34px; margin-left: 2px; }
.hole { width: 30px; }
.blend { width: 36px; }
.more { width: 28px; }
.more > svg {
    border: 1px solid #ddd;
    border-radius: 2px;
}
.moveFace { width: 32px; margin-left: 3px; }
.syncGroup .more { margin-left: 5px; }
.surface { width: 38px; }
.work { width: 40px; margin-left: 7px; color: #bbb; }
.add { width: 26px; margin-left: 2px; }
.measure { width: 52px; }
.gallery {
    display: grid;
    grid-template-columns: repeat(3, 20px);
    grid-template-rows: 24px 24px;
    place-items: center;
    width: 62px;
    height: 50px;
    margin: 1px 0 0 4px;
    border: 1px solid #ddd;
}
.gallery svg {
    width: 16px;
    height: 16px;
}
.galleryArrows {
    display: flex;
    flex-direction: column;
    gap: 13px;
    padding: 8px 0 0 5px;
}
.galleryArrows svg {
    width: 5px;
    height: 3px;
}
.galleryArrows .up {
    transform: rotate(180deg);
    opacity: 0.5;
}
.galleryArrows .tall { height: 5px; }
.small {
    margin-top: -1px;
}
.small > div {
    display: flex;
    align-items: center;
    gap: 2px;
    height: 16.7px;
}
.small svg:first-child {
    width: 12px;
    height: 12px;
}
.small .caret { margin-left: 4px; }
.featA { width: 80px; margin-left: 2px; }
.featB { width: 60px; margin-left: 4px; }
.sync { width: 70px; margin-left: 2px; }
.asm { margin-left: 4px; }
.ribbonCaret {
    align-self: flex-end;
    width: 5px;
    height: 3px;
    margin: 0 5px 4px auto;
}

/* selection bar */
.selectBar {
    display: flex;
    align-items: center;
    height: 21px;
    border-bottom: 1px solid #999;
    letter-spacing: -0.15px;
}
.burger {
    width: 8px;
    height: 8px;
    margin: 0 4px 0 8px;
}
.menu {
    width: 27px;
}
.selectBar > .vline { margin: 0 8px 0 5px; }
.combo {
    display: flex;
    align-items: center;
    justify-content: space-between;
    height: 16px;
    padding: 0 3px 0 2px;
    border: 1px solid #aaa;
    letter-spacing: -0.28px;
}
.comboA { width: 105px; }
.comboB {
    width: 110px;
    margin-left: 5px;
}
.slots {
    display: flex;
    align-items: center;
    margin-left: 4px;
}
.slot {
    display: flex;
    align-items: center;
    justify-content: center;
    width: 14.7px;
    height: 15px;
    margin: 0 1px;
}
.slot svg {
    width: 12px;
    height: 12px;
}
.slot.on {
    background-color: #cce6ee;
}
.slots .caret {
    width: 5px;
    height: 3px;
    margin: 0 2px 0 1px;
}
.gapLeft { margin-left: 3px; }
.slots .vline { margin: 0 5px 0 4px; }
.slots .half {
    width: 16px;
}
.slots .half + .caret {
    margin-right: 4px;
}
.last { margin: 3px 5px 0 auto; }

/* main area */
.main {
    display: flex;
    height: 541px;
}
.resourceBar {
    display: flex;
    flex-direction: column;
    width: 21px;
    padding-left: 2px;
    background-color: #d8d8d8;
    border-right: 1px solid #c4c4c4;
}
.gear {
    height: 18px;
    margin-bottom: 10px;
    padding: 4px 0 0 3px;
}
.gear svg {
    width: 10px;
    height: 10px;
}
.res {
    display: flex;
    align-items: center;
    justify-content: center;
    height: 28px;
}
.res svg {
    width: 16px;
    height: 16px;
}
.active {
    width: 20px;
    background-color: #fff;
}
.gap9 { margin-top: 9px; }
.gap7 { margin-top: 7px; }
.gap1 { margin-top: 1px; }
.navigator {
    width: 220px;
    padding: 0 6px 0 4px;
    border-right: 1px solid #aaa;
}
.navTitle {
    display: flex;
    align-items: center;
    justify-content: space-between;
    height: 22px;
    padding: 0 5px 0 3px;
    font-size: 10px;
    letter-spacing: -0.3px;
}
.navTitle svg {
    width: 9px;
    height: 9px;
}
.tree {
    border: 1px solid #ddd;
    border-bottom: 3px double #aaa;
    height: 459px;
}
.treeHead {
    display: flex;
    height: 15px;
    line-height: 15px;
    background-color: #f1f1f1;
    letter-spacing: -0.1px;
}
.treeHead div {
    padding-left: 4px;
    border-right: 1px solid #ddd;
}
.colName { width: 134px; }
.colC { width: 16px; }
.treeHead .colLast {
    flex: 1;
    border: none;
}
.sort {
    width: 8px;
    height: 4px;
    margin: 0 0 2px 13px;
}
.treeBody {
    height: 425px;
    margin: 0 1px;
    background-image:
        linear-gradient(#e3e3e3, #e3e3e3), linear-gradient(#e3e3e3, #e3e3e3), linear-gradient(#e3e3e3, #e3e3e3),
        repeating-linear-gradient(#fff 0 15px, #eaeaea 15px 16px, #fafafa 16px 31px, #eaeaea 31px 32px);
    background-size: 1px 100%, 1px 100%, 1px 100%, 100% 100%;
    background-position: 132px 0, 148px 0, 164px 0, 0 0;
    background-repeat: no-repeat;
}
.treeRow {
    display: flex;
    align-items: center;
    height: 16px;
    padding-left: 3px;
    font-size: 9.8px;
    letter-spacing: -0.05px;
}
.treeRow svg {
    width: 11px;
    height: 11px;
    margin-right: 1px;
}
.plus {
    width: 7px;
    height: 7px;
    margin-right: 3px;
    border: 1px solid #ccc;
    font-size: 8px;
    font-style: normal;
    line-height: 4.5px;
    text-align: center;
    color: #222;
}
.hScroll {
    display: flex;
    align-items: center;
    height: 13px;
    padding: 0 5px 0 4px;
    background-color: #f1f1f1;
}
.hScroll svg {
    width: 6px;
    height: 8px;
}
.track {
    flex: 1;
    padding-left: 5px;
}
.thumb {
    width: 157px;
    height: 13px;
    background-color: #cbcbcb;
}
.panel {
    display: flex;
    align-items: center;
    justify-content: space-between;
    height: 18.6px;
    padding: 1px 4px 0 5px;
    border-bottom: 1px solid #aaa;
    font-size: 11.1px;
    letter-spacing: 0;
    color: #1f6a85;
}
.panel svg {
    width: 10px;
    height: 8px;
    margin-bottom: 2px;
    fill: none;
    stroke: #14607c;
    stroke-width: 1.8;
}
.toolStrip {
    display: flex;
    flex-direction: column;
    align-items: center;
    width: 23px;
    padding-top: 6px;
}
.tool {
    display: flex;
    align-items: center;
    height: 21.3px;
}
.tool svg {
    width: 16px;
    height: 16px;
}
.stripEnd {
    width: 18px;
    height: 4px;
    border-bottom: 1px solid #ddd;
}
.left {
    width: 3px;
    height: 5px;
    margin: auto auto 4px 6px;
}
.docTabs {
    display: flex;
    height: 17px;
    padding-left: 4px;
    border-bottom: 1px solid #4a87a3;
    font-size: 10px;
    letter-spacing: -0.22px;
}
.docTab {
    display: flex;
    align-items: center;
    gap: 2px;
    height: 16px;
}
.docTab svg {
    width: 11px;
    height: 11px;
}
.welcome { width: 97px; }
.tools { width: 72px; }
.block {
    width: 87px;
    padding-left: 4px;
    background-color: #4e9db8;
    color: #fff;
    letter-spacing: -0.35px;
}
.docTab .mini {
    width: 7px;
    height: 7px;
    margin-left: 1.5px;
    fill: none;
    stroke: #fff;
    stroke-width: 1.2;
}
.scene {
    display: block;
    width: 1016px;
    height: 524px;
    overflow: hidden;
    background: linear-gradient(#b1b1b3, #c9cacc 35%, #dcdde0 62%, #e4e5e9 78%, #e4e5ea);
}
.blue {
    fill: none;
    stroke: #4650e6;
    stroke-width: 1.5;
}
.inner {
    fill: none;
    stroke: #d24e43;
    stroke-width: 1.6;
}
.outer {
    fill: none;
    stroke: #dc5549;
    stroke-width: 2;
    stroke-linejoin: round;
}
.axis {
    font-size: 9px;
    fill: #cdd4d6;
}
.axis.z { fill: #3548b5; font-size: 8px; }
.axis.x { fill: #c84444; font-size: 8px; }

/* status line */
.statusBar {
    display: flex;
    align-items: center;
    height: 16px;
    border-top: 1px solid #999;
    padding: 0 36px 0 2px;
    font-weight: bold;
    letter-spacing: -0.2px;
    color: #111;
}
.statusBar svg {
    width: 11px;
    height: 11px;
    margin: -2px 0 0 3px;
}
.statusBar span { margin-right: auto; }

/* windows taskbar */
.taskBar {
    display: flex;
    height: 33px;
    background-color: #141416;
    color: #fff;
}
.task {
    display: flex;
    align-items: center;
    justify-content: center;
    width: 40px;
    height: 33px;
    margin-right: 1px;
}
.task svg {
    width: 15px;
    height: 15px;
}
.task .large {
    width: 20px;
    height: 20px;
}
.open {
    width: 34px;
    margin: 0 3.5px;
    border-bottom: 2px solid #76a9dd;
}
.task + .open {
    position: relative;
    left: -1px;
}
.current {
    width: 41px;
    margin: 0;
    background-color: #424346;
}
.camtasia {
    width: 20px;
    height: 20px;
    border-radius: 2px;
    font-family: "Liberation Sans", sans-serif;
    font-size: 18px;
    font-weight: bold;
    line-height: 20px;
    text-align: center;
}
.green { background-color: #56a413; }
.red { background-color: #ef5346; }
.tray {
    display: flex;
    align-items: center;
    gap: 6px;
    margin-left: auto;
    padding-right: 20px;
    font-size: 10px;
    letter-spacing: -0.15px;
}
.tray svg {
    width: 14px;
    height: 14px;
}
.tray .people { margin-right: 11px; }
.tray .chev {
    width: 11px;
    height: 11px;
}
.lang {
    width: 20px;
    margin-left: 4px;
}
.clock {
    width: 47px;
    margin-left: 4px;
    line-height: 15px;
    text-align: center;
}
.notes {
    position: relative;
    margin-left: 8px;
}
.badge {
    position: absolute;
    left: 6px;
    top: 8px;
    width: 13px;
    height: 13px;
    border: 1px solid #999;
    border-radius: 50%;
    background-color: #333;
    font-size: 9px;
    font-weight: bold;
    line-height: 11px;
    text-align: center;
}
```
